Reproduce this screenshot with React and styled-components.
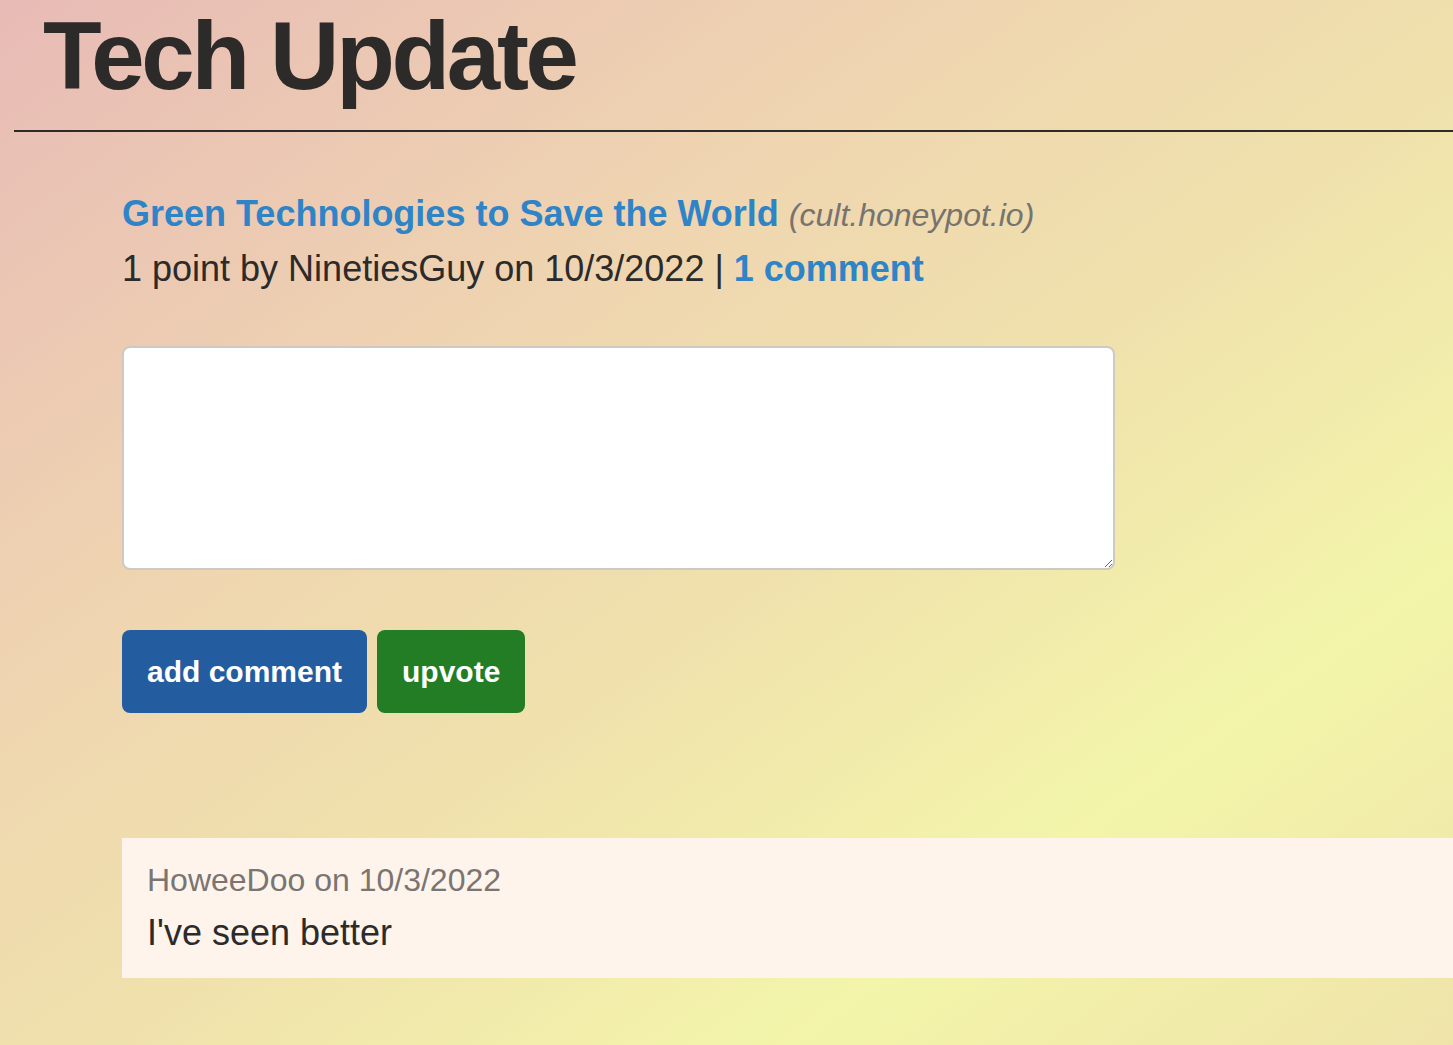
import React from "react";
import styled, { createGlobalStyle } from "styled-components";

const GlobalStyle = createGlobalStyle`
  html, body {
    margin: 0;
    padding: 0;
  }
  body {
    min-height: 1045px;
    background: linear-gradient(to bottom right, #e8bbb6 0%, #efd6b0 35%, #f0e2ac 55%, #f3f5aa 77%, #efe3a9 100%);
    font-family: "Liberation Sans", Arial, sans-serif;
    color: #2d2a2a;
    overflow: hidden;
  }
`;

const Page = styled.div`
  padding: 0 0 0 14px;
`;

const Header = styled.header`
  border-bottom: 2px solid #2d2a2a;
  padding: 0 0 18px 29px;
`;

const Title = styled.h1`
  margin: 0;
  font-size: 96px;
  line-height: 112px;
  font-weight: 700;
  letter-spacing: -3.3px;
`;

const Main = styled.main`
  padding: 58px 0 0 108px;
`;

const StoryTitle = styled.div`
  font-size: 36px;
  line-height: 48px;
`;

const StoryLink = styled.a`
  color: #2e84c7;
  font-weight: 700;
  text-decoration: none;
`;

const Domain = styled.span`
  color: #77736f;
  font-style: italic;
  font-size: 32px;
`;

const Meta = styled.div`
  font-size: 36px;
  line-height: 48px;
  margin-top: 6px;
`;

const MetaLink = styled.a`
  color: #2e84c7;
  font-weight: 700;
  text-decoration: none;
`;

const Form = styled.form`
  margin-top: 53px;
  display: flex;
  flex-direction: column;
  gap: 60px;
`;

const TextArea = styled.textarea`
  width: 993px;
  height: 224px;
  box-sizing: border-box;
  border: 2px solid #cdcac4;
  border-radius: 8px;
  background: #fff;
  font: inherit;
  font-size: 24px;
  padding: 10px;
  display: block;
`;

const Buttons = styled.div`
  display: flex;
  gap: 10px;
`;

const Button = styled.button`
  height: 83px;
  padding: 0 25px;
  border: none;
  border-radius: 8px;
  background: ${(p) => p.$bg};
  color: #fff;
  font-family: "Liberation Sans", Arial, sans-serif;
  font-weight: 700;
  font-size: 30px;
  cursor: pointer;
`;

const Comment = styled.section`
  margin-top: 125px;
  background: #fef4ec;
  padding: 22px 25px 21px;
`;

const CommentMeta = styled.div`
  color: #7a7571;
  font-size: 32px;
  line-height: 40px;
`;

const CommentText = styled.div`
  font-size: 36px;
  line-height: 48px;
  margin-top: 9px;
`;

export default function App() {
  return (
    <>
      <GlobalStyle />
      <Page>
        <Header>
          <Title>Tech Update</Title>
        </Header>
        <Main>
          <StoryTitle>
            <StoryLink href="#">Green Technologies to Save the World</StoryLink>{" "}
            <Domain>(cult.honeypot.io)</Domain>
          </StoryTitle>
          <Meta>
            1 point by NinetiesGuy on 10/3/2022 | <MetaLink href="#">1 comment</MetaLink>
          </Meta>
          <Form onSubmit={(e) => e.preventDefault()}>
            <TextArea />
            <Buttons>
              <Button type="submit" $bg="#245ca0">add comment</Button>
              <Button type="button" $bg="#227d25">upvote</Button>
            </Buttons>
          </Form>
          <Comment>
            <CommentMeta>HoweeDoo on 10/3/2022</CommentMeta>
            <CommentText>I've seen better</CommentText>
          </Comment>
        </Main>
      </Page>
    </>
  );
}
